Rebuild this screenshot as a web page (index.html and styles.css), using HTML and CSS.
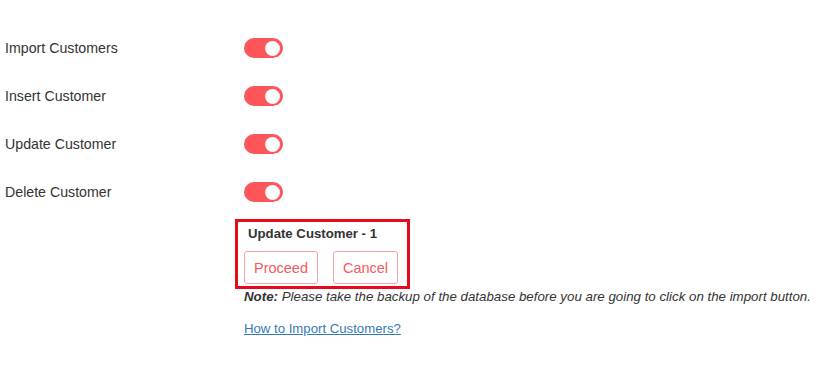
FILE: index.html
```html
<!DOCTYPE html>
<html>
<head>
<meta charset="utf-8">
<link rel="stylesheet" href="styles.css">
</head>
<body>
<div class="page">
  <div class="rows">
    <div class="row"><span class="label">Import Customers</span><span class="toggle"><span class="knob"></span></span></div>
    <div class="row"><span class="label">Insert Customer</span><span class="toggle"><span class="knob"></span></span></div>
    <div class="row"><span class="label">Update Customer</span><span class="toggle"><span class="knob"></span></span></div>
    <div class="row"><span class="label">Delete Customer</span><span class="toggle"><span class="knob"></span></span></div>
  </div>
  <div class="action">
    <div class="box">
      <div class="box-title">Update Customer - 1</div>
      <div class="buttons">
        <button class="btn btn-proceed">Proceed</button>
        <button class="btn btn-cancel">Cancel</button>
      </div>
    </div>
    <div class="after">
      <p class="note"><b>Note:</b> Please take the backup of the database before you are going to click on the import button.</p>
      <a class="link" href="#">How to Import Customers?</a>
    </div>
  </div>
</div>
</body>
</html>
```

FILE: styles.css
```css
html, body {
  margin: 0;
  padding: 0;
  background: #fff;
}
body {
  font-family: "Liberation Sans", Arial, sans-serif;
  color: #333;
}
.page {
  padding-top: 24px;
}
.rows {
  display: flex;
  flex-direction: column;
}
.row {
  display: grid;
  grid-template-columns: 244px auto;
  align-items: center;
  height: 48px;
}
.label {
  padding-left: 5px;
  font-size: 14.2px;
  color: #333;
}
.toggle {
  width: 39px;
  height: 20px;
  border-radius: 10px;
  background: #fd5558;
  display: flex;
  align-items: center;
  justify-content: flex-end;
  padding-right: 3px;
  box-sizing: border-box;
}
.knob {
  width: 15px;
  height: 15px;
  border-radius: 50%;
  background: #fff;
}
.action {
  margin-left: 235px;
  margin-top: 3px;
}
.box {
  width: 175px;
  height: 70px;
  box-sizing: border-box;
  border: 3px solid #e60a1e;
  padding: 3px 0 0 6px;
}
.box-title {
  font-weight: bold;
  font-size: 13.2px;
  color: #333;
  padding-left: 4px;
  line-height: 17px;
}
.buttons {
  display: flex;
  gap: 15px;
  margin-top: 9px;
}
.btn {
  font-family: "Liberation Sans", Arial, sans-serif;
  font-size: 14.5px;
  color: #f55a5e;
  background: #fff;
  border: 1px solid #f7a3a6;
  border-radius: 3px;
  height: 33px;
  padding: 0;
}
.btn-proceed { width: 74px; }
.btn-cancel { width: 65px; }
.after {
  padding-left: 9px;
}
.note {
  margin: 0;
  font-size: 13.3px;
  font-style: italic;
  color: #333;
  line-height: 16px;
  white-space: nowrap;
}
.note b {
  font-weight: bold;
}
.link {
  display: inline-block;
  margin-top: 16px;
  font-size: 13.2px;
  color: #337ab7;
  text-decoration: underline;
}
```
